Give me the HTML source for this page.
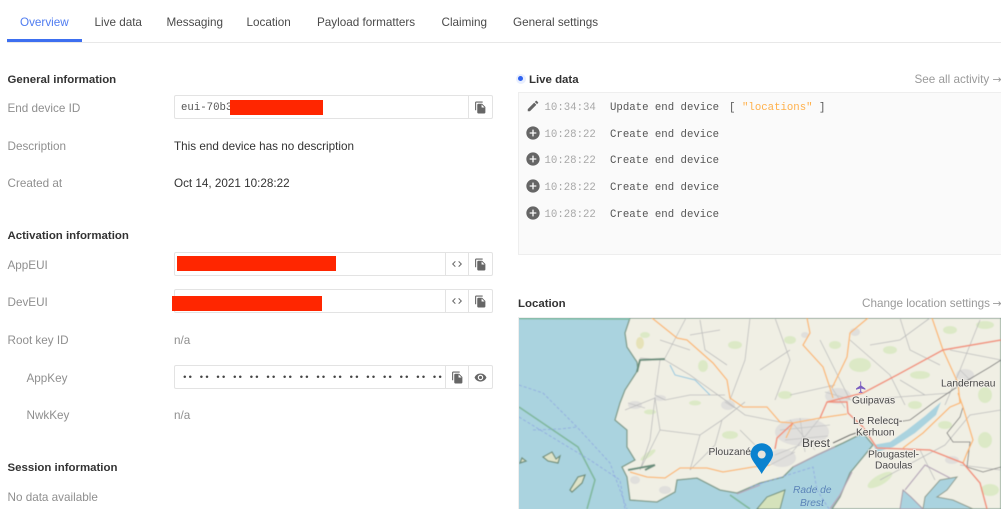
<!DOCTYPE html>
<html lang="en">
<head>
<meta charset="utf-8">
<title>End device overview</title>
<style>
html,body{margin:0;padding:0;background:#fff}
body{position:relative;width:1001px;height:509px;overflow:hidden;font-family:"Liberation Sans",sans-serif;font-size:11.7px;color:#333}
.t{position:absolute;line-height:16px;white-space:nowrap;margin-top:1px}
.tab{color:#4a4a4a;top:13.5px}
.b{font-weight:700;color:#333;font-size:11.45px}
.l{color:#8f8f8f}
.v{color:#333}
.t.m{font-family:"Liberation Mono",monospace;font-size:10.7px;color:#555;margin-top:0}
.t.g{color:#a8a8a8}
.box{position:absolute;left:174px;width:317px;height:22px;border:1px solid #e3e3e3;border-radius:2px;background:#fff}
.d{position:absolute;top:0;bottom:0;width:1px;background:#e3e3e3}
.r{position:absolute;background:#ff2600}
svg.i{position:absolute;fill:#666}
.lk{color:#9a9a9a}
.a{font-family:"DejaVu Sans",sans-serif;font-size:11px}
</style>
</head>
<body>
<div style="position:absolute;left:7px;top:42px;width:994px;height:1px;background:#e8e8e8"></div>
<div style="position:absolute;left:7px;top:39px;width:75px;height:3px;background:#3d6ff0"></div>
<span class="t tab" style="left:20px;color:#4f7cf0">Overview</span>
<span class="t tab" style="left:94.5px">Live data</span>
<span class="t tab" style="left:166.5px">Messaging</span>
<span class="t tab" style="left:246.5px">Location</span>
<span class="t tab" style="left:317px">Payload formatters</span>
<span class="t tab" style="left:441.5px">Claiming</span>
<span class="t tab" style="left:513px">General settings</span>

<span class="t b" style="left:7.5px;top:70.5px">General information</span>
<span class="t l" style="left:7.5px;top:99.5px">End device ID</span>
<div class="box" style="top:95px"><div class="d" style="left:293px"></div></div>
<span class="t m" style="left:181px;top:99.5px">eui-70b3</span>
<div class="r" style="left:230px;top:100px;width:93px;height:15px"></div>
<svg class="i" style="left:474px;top:101px" width="13" height="13" viewBox="0 0 24 24"><path d="M16 1H4c-1.100 0-2 .9-2 2v14h2V3h12V1zm-1 4l6 6v10c0 1.100-.9 2-2 2H7.990C6.890 23 6 22.100 6 21l.01-14c0-1.100.89-2 1.990-2h7zm-1 7h5.500L14 6.500V12z"/></svg>

<span class="t l" style="left:7.5px;top:138px">Description</span>
<span class="t v" style="left:174px;top:138px">This end device has no description</span>
<span class="t l" style="left:7.5px;top:175px">Created at</span>
<span class="t v" style="left:174px;top:175px">Oct 14, 2021 10:28:22</span>

<span class="t b" style="left:7.5px;top:226.5px">Activation information</span>
<span class="t l" style="left:7.5px;top:257px">AppEUI</span>
<div class="box" style="top:252px"><div class="d" style="left:270px"></div><div class="d" style="left:293px"></div></div>
<div class="r" style="left:177px;top:256px;width:159px;height:15px"></div>
<svg class="i" style="left:451px;top:258px" width="12" height="12" viewBox="0 0 24 24"><path d="M9.400 16.600L4.800 12l4.600-4.600L8 6l-6 6 6 6 1.400-1.400zm5.200 0l4.600-4.600-4.600-4.600L16 6l6 6-6 6-1.400-1.400z"/></svg>
<svg class="i" style="left:474px;top:258px" width="13" height="13" viewBox="0 0 24 24"><path d="M16 1H4c-1.100 0-2 .9-2 2v14h2V3h12V1zm-1 4l6 6v10c0 1.100-.9 2-2 2H7.990C6.890 23 6 22.100 6 21l.01-14c0-1.100.89-2 1.990-2h7zm-1 7h5.500L14 6.500V12z"/></svg>

<span class="t l" style="left:7.5px;top:294px">DevEUI</span>
<div class="box" style="top:289px"><div class="d" style="left:270px"></div><div class="d" style="left:293px"></div></div>
<div class="r" style="left:172px;top:296px;width:150px;height:15px"></div>
<svg class="i" style="left:451px;top:295px" width="12" height="12" viewBox="0 0 24 24"><path d="M9.400 16.600L4.800 12l4.600-4.600L8 6l-6 6 6 6 1.400-1.400zm5.200 0l4.600-4.600-4.600-4.600L16 6l6 6-6 6-1.400-1.400z"/></svg>
<svg class="i" style="left:474px;top:295px" width="13" height="13" viewBox="0 0 24 24"><path d="M16 1H4c-1.100 0-2 .9-2 2v14h2V3h12V1zm-1 4l6 6v10c0 1.100-.9 2-2 2H7.990C6.890 23 6 22.100 6 21l.01-14c0-1.100.89-2 1.990-2h7zm-1 7h5.500L14 6.500V12z"/></svg>

<span class="t l" style="left:7.5px;top:332px">Root key ID</span>
<span class="t l" style="left:174px;top:332px">n/a</span>
<span class="t l" style="left:26.5px;top:370px">AppKey</span>
<div class="box" style="top:365px"><div class="d" style="left:270px"></div><div class="d" style="left:293px"></div></div>
<span class="t m" style="left:182px;top:370px;width:261px;overflow:hidden;font-size:9.25px;color:#444">•• •• •• •• •• •• •• •• •• •• •• •• •• •• •• •• •• •• •• •• ••</span>
<svg class="i" style="left:451px;top:371px" width="13" height="13" viewBox="0 0 24 24"><path d="M16 1H4c-1.100 0-2 .9-2 2v14h2V3h12V1zm-1 4l6 6v10c0 1.100-.9 2-2 2H7.990C6.890 23 6 22.100 6 21l.01-14c0-1.100.89-2 1.990-2h7zm-1 7h5.500L14 6.500V12z"/></svg>
<svg class="i" style="left:474px;top:371px" width="13" height="13" viewBox="0 0 24 24"><path d="M12 4.500C7 4.500 2.730 7.610 1 12c1.730 4.390 6 7.500 11 7.500s9.270-3.110 11-7.500c-1.730-4.390-6-7.500-11-7.500zM12 17c-2.760 0-5-2.240-5-5s2.240-5 5-5 5 2.240 5 5-2.240 5-5 5zm0-8c-1.660 0-3 1.340-3 3s1.340 3 3 3 3-1.340 3-3-1.340-3-3-3z"/></svg>
<span class="t l" style="left:26.5px;top:407px">NwkKey</span>
<span class="t l" style="left:174px;top:407px">n/a</span>

<span class="t b" style="left:7.5px;top:459px">Session information</span>
<span class="t l" style="left:7.5px;top:489px">No data available</span>

<!-- Live data -->
<div style="position:absolute;left:515.5px;top:73.5px;width:10px;height:10px;border-radius:50%;background:#e9effe"></div>
<div style="position:absolute;left:518px;top:76px;width:5px;height:5px;border-radius:50%;background:#2f62f0"></div>
<span class="t b" style="left:529px;top:70.5px">Live data</span>
<span class="t lk" style="left:914.5px;top:70.5px">See all activity</span>
<span class="t lk a" style="left:992.5px;top:70.5px">→</span>
<div style="position:absolute;left:518px;top:92px;width:490px;height:161px;background:#fafafa;border:1px solid #eee"></div>

<svg class="i" style="left:526px;top:99px" width="14" height="14" viewBox="0 0 24 24"><path d="M3 17.250V21h3.750L17.810 9.940l-3.750-3.750L3 17.250zM20.710 7.040c.39-.39.39-1.020 0-1.410l-2.340-2.340c-.39-.39-1.020-.39-1.410 0l-1.830 1.830 3.750 3.750 1.830-1.830z"/></svg>
<span class="t m g" style="left:544.5px;top:99.5px">10:34:34</span>
<span class="t m" style="left:610px;top:99.5px">Update end device</span>
<span class="t m" style="left:729px;top:99.5px">[</span>
<span class="t m" style="left:742px;top:99.5px;color:#ffb04a">"locations"</span>
<span class="t m" style="left:819px;top:99.5px">]</span>

<svg class="i" style="left:525px;top:125px" width="16" height="16" viewBox="0 0 24 24"><path d="M12 2C6.480 2 2 6.480 2 12s4.480 10 10 10 10-4.480 10-10S17.520 2 12 2zm5 11h-4v4h-2v-4H7v-2h4V7h2v4h4v2z"/></svg>
<span class="t m g" style="left:544.5px;top:126.5px">10:28:22</span>
<span class="t m" style="left:610px;top:126.5px">Create end device</span>

<svg class="i" style="left:525px;top:151px" width="16" height="16" viewBox="0 0 24 24"><path d="M12 2C6.480 2 2 6.480 2 12s4.480 10 10 10 10-4.480 10-10S17.520 2 12 2zm5 11h-4v4h-2v-4H7v-2h4V7h2v4h4v2z"/></svg>
<span class="t m g" style="left:544.5px;top:152.5px">10:28:22</span>
<span class="t m" style="left:610px;top:152.5px">Create end device</span>

<svg class="i" style="left:525px;top:178px" width="16" height="16" viewBox="0 0 24 24"><path d="M12 2C6.480 2 2 6.480 2 12s4.480 10 10 10 10-4.480 10-10S17.520 2 12 2zm5 11h-4v4h-2v-4H7v-2h4V7h2v4h4v2z"/></svg>
<span class="t m g" style="left:544.5px;top:179.5px">10:28:22</span>
<span class="t m" style="left:610px;top:179.5px">Create end device</span>

<svg class="i" style="left:525px;top:205px" width="16" height="16" viewBox="0 0 24 24"><path d="M12 2C6.480 2 2 6.480 2 12s4.480 10 10 10 10-4.480 10-10S17.520 2 12 2zm5 11h-4v4h-2v-4H7v-2h4V7h2v4h4v2z"/></svg>
<span class="t m g" style="left:544.5px;top:206.5px">10:28:22</span>
<span class="t m" style="left:610px;top:206.5px">Create end device</span>

<!-- Location -->
<span class="t b" style="left:518px;top:295px">Location</span>
<span class="t lk" style="left:862px;top:295px">Change location settings</span>
<span class="t lk a" style="left:992.5px;top:295px">→</span>

<svg style="position:absolute;left:0;top:0" width="1001" height="509" viewBox="0 0 1001 509">
<defs>
<clipPath id="c"><rect x="519" y="318" width="482" height="191"/></clipPath>
<filter id="s" x="-5%" y="-5%" width="110%" height="110%"><feGaussianBlur stdDeviation="0.45"/></filter>
</defs>
<rect x="518.5" y="317.5" width="483" height="192" fill="none" stroke="#eee"/>
<g clip-path="url(#c)">
<rect x="519" y="318" width="482" height="191" fill="#aad3df"/>
<g filter="url(#s)">
<path d="M630 318L625 333 627 347 637 362 638 370 625 390 620 403 615 420 627 430 627 447 635 460 622 467 627 477 630 500 657 502 675 492 677 480 697 478 720 490 737 493 760 483 783 477 793 467 817 455 843 443 863 433 873 445 850 473 840 497 832 509H1001V318Z" fill="#f0efe4" stroke="#7f9c8c" stroke-width="1.300"/>
<!-- estuary and inlets -->
<path d="M873 445L890 442 907 430 925 416 941 402 936 415 915 433 893 447 877 452Z" fill="#aad3df"/>
<path d="M923 509L925 497 940 480 957 477 947 490 937 497 953 500 973 509Z" fill="#aad3df" stroke="#8c9a8a"/>
<path d="M900 509L903 490 911 497 923 509Z" fill="#aad3df" stroke="#a799a8"/>
<!-- green patches -->
<g fill="#d6e8bd" opacity=".75">
<ellipse cx="703" cy="366" rx="5" ry="6"/><ellipse cx="695" cy="403" rx="6" ry="2.500"/><ellipse cx="650" cy="412" rx="6" ry="2.500"/><ellipse cx="648" cy="455" rx="9" ry="2.500" transform="rotate(-35 648 455)"/>
<ellipse cx="645" cy="335" rx="5" ry="3"/><ellipse cx="735" cy="345" rx="7" ry="4"/><ellipse cx="790" cy="340" rx="6" ry="4"/><ellipse cx="835" cy="345" rx="6" ry="4"/><ellipse cx="860" cy="365" rx="11" ry="7"/>
<ellipse cx="890" cy="350" rx="7" ry="4"/><ellipse cx="920" cy="375" rx="10" ry="4"/><ellipse cx="915" cy="405" rx="7" ry="4"/><ellipse cx="945" cy="425" rx="7" ry="4"/><ellipse cx="985" cy="395" rx="7" ry="8"/><ellipse cx="985" cy="440" rx="7" ry="8"/><ellipse cx="950" cy="330" rx="7" ry="4"/><ellipse cx="985" cy="325" rx="9" ry="4"/><ellipse cx="990" cy="490" rx="9" ry="6"/><ellipse cx="880" cy="480" rx="14" ry="5" transform="rotate(-30 880 480)"/><ellipse cx="730" cy="435" rx="8" ry="4"/><ellipse cx="785" cy="395" rx="7" ry="4"/>
</g>
<ellipse cx="640" cy="343" rx="4" ry="6" fill="#e6e2b8"/>
<!-- urban -->
<g fill="#e0dfdc">
<ellipse cx="802" cy="432" rx="27" ry="14"/><ellipse cx="782" cy="458" rx="14" ry="9"/><ellipse cx="838" cy="396" rx="13" ry="8"/><ellipse cx="728" cy="405" rx="7" ry="5"/><ellipse cx="660" cy="398" rx="6" ry="3"/><ellipse cx="965" cy="375" rx="9" ry="6"/><ellipse cx="855" cy="332" rx="5" ry="4"/><ellipse cx="805" cy="335" rx="4" ry="3"/><ellipse cx="665" cy="490" rx="6" ry="4"/><ellipse cx="635" cy="480" rx="5" ry="4"/><ellipse cx="635" cy="405" rx="7" ry="4"/><ellipse cx="952" cy="460" rx="7" ry="4"/>
</g>
<!-- urban streets -->
<path d="M780 430L830 425M785 440L828 436M790 420L815 450M800 418L805 452M820 418L790 455M775 455L800 445M770 465L795 452M825 392L852 400M830 385L845 408M725 402L735 408M960 370L972 382M628 403L645 408" fill="none" stroke="#c4c4c4" stroke-width=".8"/>
<!-- minor roads -->
<g fill="none" stroke="#bcbcbc" stroke-width=".8">
<path d="M640 358L665 360 690 375 725 400 745 415 780 422M686 318L665 358M655 395L665 400 690 395 725 395M625 410L655 398 650 440 640 470M655 398L660 430 700 435 722 420 745 402M660 430L640 470M700 435L690 470M722 420L715 445 690 470M660 360L655 395M700 320L705 350 727 365M750 318L745 360 730 400M775 318L790 360 775 400M850 340L890 375 905 405M820 340L850 400M835 385L790 395M900 318L910 350 940 365M860 400L950 393M980 320L960 370 945 405M950 350L1001 360M1001 410L970 415 945 445 880 480M920 450L935 480M960 465L1001 470M870 345L900 340 930 318M740 430L755 445M690 335L720 330M660 340L690 350M760 370L790 350M900 380L925 395"/>
</g>
<!-- rail -->
<path d="M897 422L910 420 933 403 963 383 990 367 1001 360M963 407L960 417 947 433 953 442 970 442 967 467 983 472 1001 467" fill="none" stroke="#707070" stroke-width=".8"/>
<!-- orange -->
<g fill="none" stroke="#fbb870" stroke-width="1.300">
<path d="M652 318L677 338 687 340 713 363 727 380 730 398 743 407 767 407 780 422 793 423 820 418 847 414"/>
<path d="M630 472L647 477 665 478 680 468 707 468 723 472 753 467 770 465"/>
<path d="M807 318L810 333 803 345 823 367 830 388 833 398"/>
<path d="M868 318L850 333 847 357 832 388"/>
<path d="M932 318L943 350 958 383 960 403 950 407 923 433 903 448"/>
<path d="M958 393L963 407 973 440 967 453 963 463"/>
<path d="M793 423L786 438"/>
</g>
<!-- red -->
<g fill="none" stroke="#f2907a" stroke-width="1.500">
<path d="M1001 340L943 350 897 375 863 393 827 402 820 418"/>
<path d="M827 402L847 402 848 413 863 427 877 448 930 450 963 463 980 483 987 509"/>
<path d="M775 449L777 438 793 423"/>
</g>
<!-- cliffs -->
<path d="M637 372L640 360 665 359M628 470L655 465 645 470" fill="none" stroke="#6b8f7d" stroke-width="2"/>
<path d="M670 365L675 375 695 380 710 395" fill="none" stroke="#8fc7e0" stroke-width="1"/>
<path d="M833 443L850 435 856 433" fill="none" stroke="#555" stroke-width="1"/>
<!-- purple coast -->
<path d="M793 467L817 455 835 447M830 509L840 495 852 472M905 490L925 465 950 478M737 494L760 485" fill="none" stroke="#b5a5b8" stroke-width="1.200"/>
<!-- sea boundaries -->
<path d="M519 407L578 447 595 480 587 509M519 318.500L630 319M730 495L750 509" fill="none" stroke="#7fb79c" stroke-width="1.500"/>
<path d="M519 385L543 393 577 427 610 463 627 509M519 417L560 442 590 460 620 480 625 509M533 430L560 429 577 427M750 487L813 467 817 490M829 509L817 490" fill="none" stroke="#8fa8e0" stroke-width=".8" stroke-dasharray="3 2"/>
<!-- islands -->
<path d="M543 457L552 452 556 459 560 456 558 463 548 461Z M522 458L526 461 520 463Z M570 490L578 477 585 475 582 483 572 492Z" fill="#dfe3c8" stroke="#6f8f7d" stroke-width="1.200"/>
<path d="M757 509L767 497 785 490 780 509Z" fill="#d5e2bb" stroke="#6f8f7d"/>
</g>
<!-- airport -->
<path d="M860.200 382V385.500L856 388.500V389.800L860.200 388.500V391.500L858.800 392.500V393L860.700 392.600 862.600 393V392.500L861.200 391.500V388.500L865.400 389.800V388.500L861.200 385.500V382C861.200 381 860.200 381 860.200 382Z" fill="#7b5ec0"/>
<!-- labels -->
<g font-family="'Liberation Sans',sans-serif" fill="#4a4a4a" stroke="#f2efe9" stroke-width="2" paint-order="stroke" stroke-opacity=".75">
<text x="708.500" y="455" font-size="10.200">Plouzané</text>
<text x="852" y="403.500" font-size="10.200">Guipavas</text>
<text x="853" y="424" font-size="10.200">Le Relecq-</text>
<text x="856" y="435.500" font-size="10.200">Kerhuon</text>
<text x="802" y="447" font-size="12">Brest</text>
<text x="868" y="457.500" font-size="10.200">Plougastel-</text>
<text x="875" y="468.500" font-size="10.200">Daoulas</text>
<text x="941" y="386.500" font-size="10.200">Landerneau</text>
</g>
<g font-family="'Liberation Sans',sans-serif" font-style="italic" font-size="10.200" fill="#5c84b8">
<text x="793" y="493">Rade de</text>
<text x="800" y="506">Brest</text>
</g>
<!-- pin -->
<path d="M761.700 474C758 467 750.500 459.500 750.500 454.500A11.200 11.200 0 0 1 773 454.500C773 459.500 765.500 467 761.700 474Z" fill="#0a82cf"/>
<circle cx="761.700" cy="454.500" r="4" fill="#e8e4dc"/>
</g>
</svg>
</body>
</html>
